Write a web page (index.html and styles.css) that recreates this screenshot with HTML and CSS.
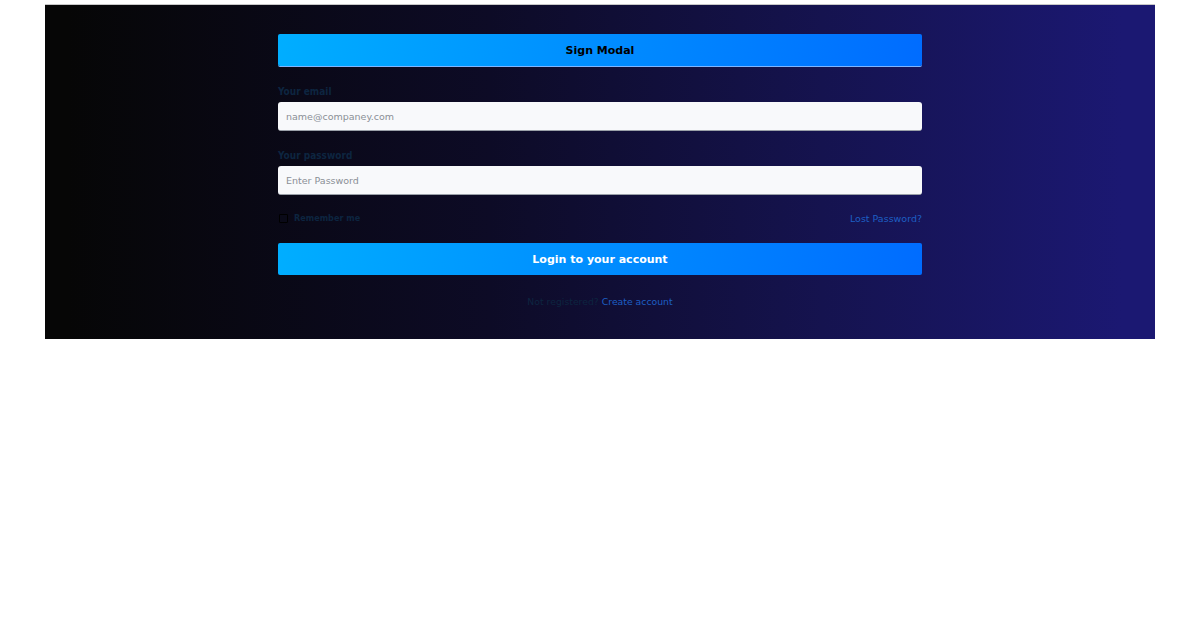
FILE: index.html
```html
<!DOCTYPE html>
<html>
<head>
<meta charset="utf-8">
<link rel="stylesheet" href="styles.css">
</head>
<body>
<div class="wrap">
  <section class="panel">
    <form class="form">
      <div class="title">Sign Modal</div>
      <label class="label">Your email</label>
      <div class="input">name@companey.com</div>
      <label class="label">Your password</label>
      <div class="input">Enter Password</div>
      <div class="row">
        <span class="check"><span class="box"></span>Remember me</span>
        <a class="link">Lost Password?</a>
      </div>
      <div class="btn">Login to your account</div>
      <div class="foot"><span class="muted">Not registered?</span> <a class="link">Create account</a></div>
    </form>
  </section>
</div>
</body>
</html>
```
FILE: styles.css
```css
html, body { margin: 0; padding: 0; background: #fff; }
body { font-family: "DejaVu Sans", sans-serif; }
.wrap { padding-top: 4px; width: 1110px; margin: 0 auto; }
.panel {
  border-top: 1px solid #c8c8c8;
  height: 334px;
  background: linear-gradient(to right, #060606 2%, #0d0b26 40%, #15134f 70%, #1b1872 97%);
  display: flex;
  justify-content: center;
}
.form { width: 644px; padding-top: 29px; display: flex; flex-direction: column; }
.title {
  height: 32px;
  border-radius: 2px;
  background: linear-gradient(100deg, #00aeff, #006cff);
  box-shadow: 0 1px 0 #7fb5ff;
  color: #000;
  font-weight: bold;
  font-size: 11px;
  display: flex; align-items: center; justify-content: center;
}
.label {
  font-family: "DejaVu Sans Condensed", "DejaVu Sans", sans-serif;
  color: #0d2540;
  font-size: 10px;
  font-weight: bold;
  margin-top: 20px;
  height: 12px;
  line-height: 12px;
  margin-bottom: 4px;
}
.input + .label { margin-top: 19px; }
.input {
  height: 29px;
  box-sizing: border-box;
  background: #f8f9fb;
  border-radius: 3px;
  border-bottom: 1px solid #9aa0a8;
  color: #8a8f96;
  font-size: 9.5px;
  padding-left: 8px;
  display: flex; align-items: center;
}
.row {
  margin-top: 18px;
  display: flex; justify-content: space-between; align-items: center;
  height: 10px;
  font-size: 9.5px;
}
.check {
  font-family: "DejaVu Sans Condensed", "DejaVu Sans", sans-serif;
  color: #0d2540; font-size: 9px; font-weight: bold;
  display: flex; align-items: center;
}
.box {
  width: 7px; height: 7px;
  border: 1px solid #000;
  background: #0a0a18;
  border-radius: 1px;
  margin: 0 6px 0 1px;
}
.link { color: #1d5fc4; }
.btn {
  margin-top: 20px;
  height: 32px;
  border-radius: 2px;
  background: linear-gradient(100deg, #00aeff, #006cff);
  color: #fff;
  font-weight: bold;
  font-size: 11px;
  display: flex; align-items: center; justify-content: center;
}
.foot { margin-top: 21px; text-align: center; font-size: 9.3px; }
.muted { color: #0d2540; }
```
